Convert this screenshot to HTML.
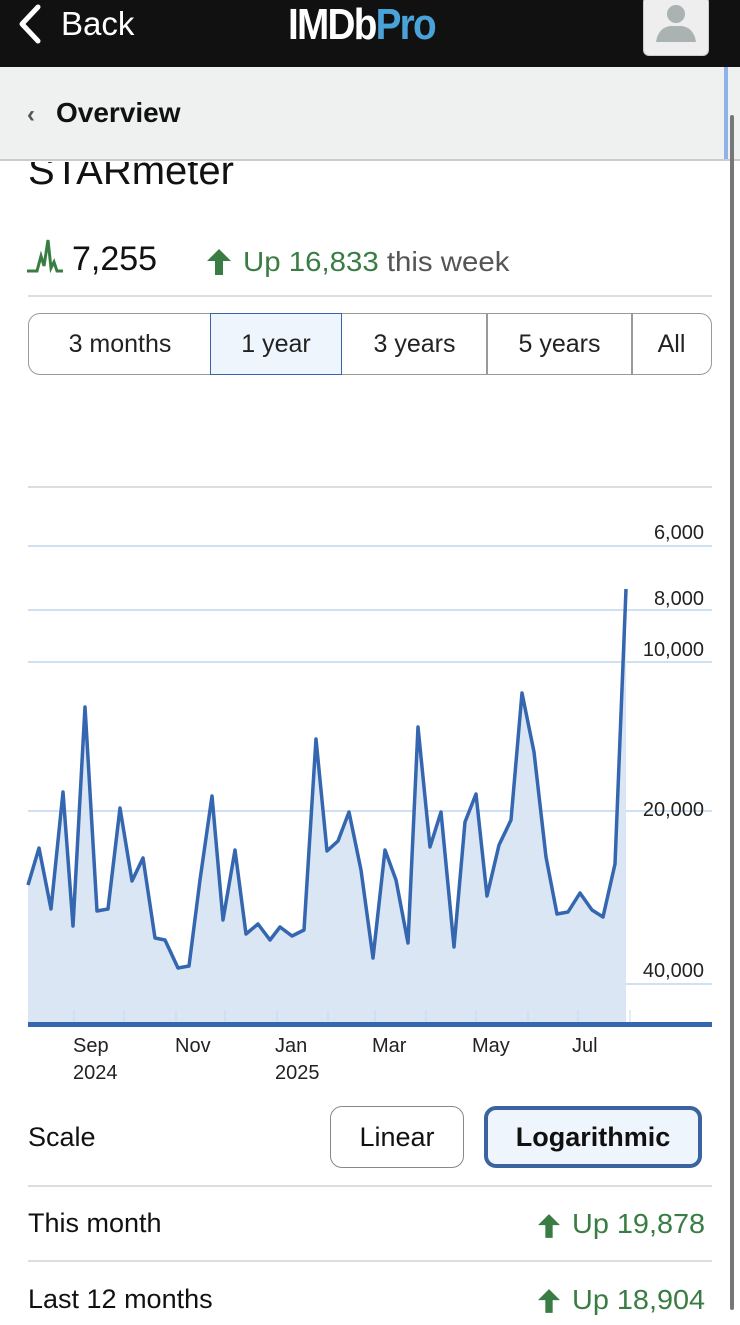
<!DOCTYPE html>
<html><head><meta charset="utf-8"><style>
*{margin:0;padding:0;box-sizing:border-box}
body{width:740px;height:1325px;overflow:hidden;background:#fff;font-family:"Liberation Sans",sans-serif;position:relative;color:#111}
.a{position:absolute}
.seg{position:absolute;top:313px;height:62px;border:1.5px solid #999;font-size:25px;display:flex;align-items:center;justify-content:center;color:#222}
.hl{position:absolute;left:28px;width:684px;height:2px;background:#ddd}
.g{position:absolute;left:28px;width:684px;height:2px;background:#cfe0f0}
.yl{position:absolute;right:36px;font-size:20px;color:#222}
.xl{position:absolute;font-size:20px;color:#222;line-height:27px}
.grn{color:#3a7d44}
</style></head><body>
<div class="a" style="left:0;top:0;width:740px;height:67px;background:#111"></div>
<svg class="a" style="left:16px;top:4px" width="28" height="40" viewBox="0 0 28 40"><path d="M22 3 L6 20 L22 37" stroke="#fff" stroke-width="5" fill="none" stroke-linecap="round" stroke-linejoin="round"/></svg>
<div class="a" style="left:61px;top:5px;font-size:33px;color:#fff">Back</div>
<div class="a" style="left:288px;top:0px;font-size:44px;font-weight:bold;color:#fff;letter-spacing:-2px;transform:scaleX(0.88);transform-origin:left">IMDb<span style="color:#4aa3d8">Pro</span></div>
<div class="a" style="left:643px;top:-4px;width:66px;height:60px;background:#eee;border-radius:6px;border:1px solid #ccc"></div>
<svg class="a" style="left:654px;top:2px" width="44" height="40" viewBox="0 0 44 40"><circle cx="22" cy="12" r="9" fill="#aab2b2"/><path d="M2 40 Q4 26 16 24 L28 24 Q40 26 42 40Z" fill="#aab2b2"/></svg>
<div class="a" style="left:0;top:67px;width:740px;height:94px;background:#eff1f0;border-bottom:2px solid #ccc"></div>
<div class="a" style="left:724px;top:67px;width:4px;height:92px;background:#8fb3e8"></div>
<div class="a" style="left:27px;top:101px;font-size:24px;color:#555;font-weight:bold">‹</div>
<div class="a" style="left:56px;top:97px;font-size:28px;font-weight:bold;color:#111">Overview</div>
<div class="a" style="left:28px;top:162px;height:30px;overflow:hidden;width:400px"><div style="font-size:40px;margin-top:-13px">STARmeter</div></div>
<svg class="a" style="left:27px;top:238px" width="36" height="36" viewBox="0 0 36 36"><path d="M0 33 L10 33 L14 18 L17 28 L21 2 L24 30 L27 24 L30 33 L36 33" stroke="#3a7d44" stroke-width="3" fill="none"/></svg>
<div class="a" style="left:72px;top:240px;font-size:34px">7,255</div>
<svg class="a" style="left:207px;top:249px" width="24" height="26" viewBox="0 0 24 26"><path d="M12 0 L24 12 L16 12 L16 26 L8 26 L8 12 L0 12Z" fill="#3a7d44"/></svg>
<div class="a" style="left:243px;top:246px;font-size:28px;transform:scaleX(1.05);transform-origin:left"><span class="grn">Up 16,833</span> <span style="color:#555">this week</span></div>
<div class="hl" style="top:295px"></div>
<div class="seg" style="left:28px;width:184px;border-radius:12px 0 0 12px">3 months</div>
<div class="seg" style="left:210px;width:132px;background:#eef5fc;border-color:#3566a8;z-index:2">1 year</div>
<div class="seg" style="left:341px;width:147px">3 years</div>
<div class="seg" style="left:486px;width:147px">5 years</div>
<div class="seg" style="left:631px;width:81px;border-radius:0 12px 12px 0">All</div>
<div class="hl" style="top:486px;background:#ddd"></div>
<div class="g" style="top:545px"></div>
<div class="g" style="top:609px"></div>
<div class="g" style="top:661px"></div>
<div class="g" style="top:810px"></div>
<div class="g" style="top:983px"></div>
<svg class="a" style="left:0;top:0" width="740" height="1030">
<polygon fill="#dae6f4" points="28,885 39,848 51,909 63,792 73,926 85,707 97,911 108,909 120,808 132,881 143,858 155,938 165,940 178,968 189,966 200,880 212,796 223,920 235,850 246,934 258,924 270,940 280,927 292,936 304,930 316,739 327,851 338,841 349,812 361,870 373,958 385,850 396,880 408,943 418,727 430,847 441,812 454,947 465,822 476,794 487,896 499,845 511,820 522,693 534,752 546,857 557,914 568,912 580,893 592,910 603,917 615,864 626,589 626,1024 28,1024"/>
<g stroke="#c8d8ea" stroke-width="1"><line x1="74" y1="1010" x2="74" y2="1023"/><line x1="124" y1="1010" x2="124" y2="1023"/><line x1="176" y1="1010" x2="176" y2="1023"/><line x1="225" y1="1010" x2="225" y2="1023"/><line x1="277" y1="1010" x2="277" y2="1023"/><line x1="328" y1="1010" x2="328" y2="1023"/><line x1="375" y1="1010" x2="375" y2="1023"/><line x1="426" y1="1010" x2="426" y2="1023"/><line x1="476" y1="1010" x2="476" y2="1023"/><line x1="528" y1="1010" x2="528" y2="1023"/><line x1="578" y1="1010" x2="578" y2="1023"/><line x1="630" y1="1010" x2="630" y2="1023"/></g>
<polyline fill="none" stroke="#3566b0" stroke-width="3.5" stroke-linejoin="round" points="28,885 39,848 51,909 63,792 73,926 85,707 97,911 108,909 120,808 132,881 143,858 155,938 165,940 178,968 189,966 200,880 212,796 223,920 235,850 246,934 258,924 270,940 280,927 292,936 304,930 316,739 327,851 338,841 349,812 361,870 373,958 385,850 396,880 408,943 418,727 430,847 441,812 454,947 465,822 476,794 487,896 499,845 511,820 522,693 534,752 546,857 557,914 568,912 580,893 592,910 603,917 615,864 626,589"/>
<rect x="28" y="1022" width="684" height="5" fill="#3566b0"/>
</svg>
<div class="yl" style="top:522px">6,000</div>
<div class="yl" style="top:588px">8,000</div>
<div class="yl" style="top:639px">10,000</div>
<div class="yl" style="top:799px">20,000</div>
<div class="yl" style="top:960px">40,000</div>
<div class="xl" style="left:73px;top:1033px">Sep<br>2024</div>
<div class="xl" style="left:175px;top:1033px">Nov</div>
<div class="xl" style="left:275px;top:1033px">Jan<br>2025</div>
<div class="xl" style="left:372px;top:1033px">Mar</div>
<div class="xl" style="left:472px;top:1033px">May</div>
<div class="xl" style="left:572px;top:1033px">Jul</div>
<div class="a" style="left:28px;top:1122px;font-size:27px">Scale</div>
<div class="a" style="left:330px;top:1106px;width:134px;height:62px;border:1.5px solid #888;border-radius:12px;font-size:27px;display:flex;align-items:center;justify-content:center">Linear</div>
<div class="a" style="left:484px;top:1106px;width:218px;height:62px;border:4px solid #3a63a0;border-radius:12px;background:#eef5fc;font-size:27px;font-weight:bold;display:flex;align-items:center;justify-content:center">Logarithmic</div>
<div class="hl" style="top:1185px"></div>
<div class="a" style="left:28px;top:1208px;font-size:27px">This month</div>
<svg class="a" style="left:538px;top:1214px" width="22" height="24" viewBox="0 0 24 26"><path d="M12 0 L24 12 L16 12 L16 26 L8 26 L8 12 L0 12Z" fill="#3a7d44"/></svg>
<div class="a grn" style="left:572px;top:1208px;font-size:28px;transform:scaleX(1.03);transform-origin:left">Up 19,878</div>
<div class="hl" style="top:1260px"></div>
<div class="a" style="left:28px;top:1284px;font-size:27px">Last 12 months</div>
<svg class="a" style="left:538px;top:1289px" width="22" height="24" viewBox="0 0 24 26"><path d="M12 0 L24 12 L16 12 L16 26 L8 26 L8 12 L0 12Z" fill="#3a7d44"/></svg>
<div class="a grn" style="left:572px;top:1284px;font-size:28px;transform:scaleX(1.03);transform-origin:left">Up 18,904</div>
<div class="a" style="left:730px;top:115px;width:4px;height:1195px;background:#777;border-radius:2px"></div>
</body></html>
